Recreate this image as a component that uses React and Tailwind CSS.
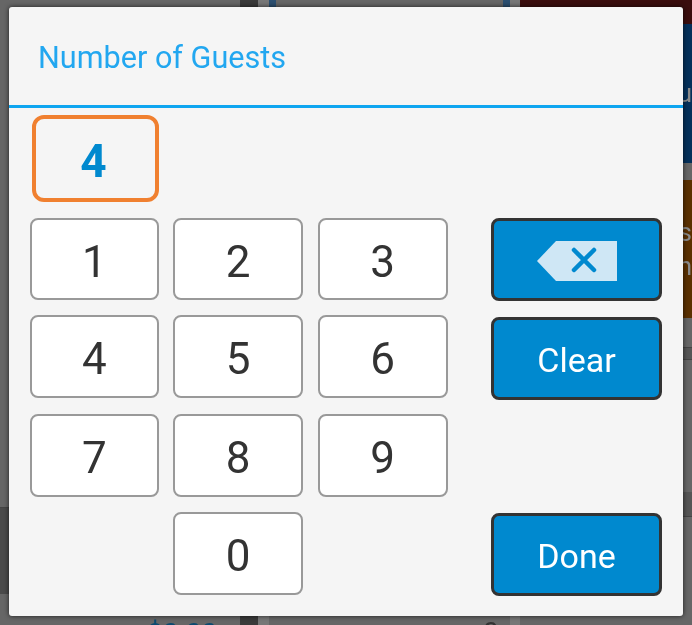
import React from 'react';

const keys = ['1', '2', '3', '4', '5', '6', '7', '8', '9', '', '0', ''];

function Key({ label }) {
    if (!label) return <div />;
    return (
        <button className="flex items-center justify-center pt-[5px] bg-white border-[2.5px] border-[#999999] rounded-lg text-[44px] leading-none text-[#333333]">
            {label}
        </button>
    );
}

function ActionButton({ children }) {
    return (
        <button className="flex items-center justify-center w-[171px] h-[83px] pt-[2px] bg-[#0089cf] border-[3px] border-[#333333] rounded-lg text-[34px] leading-none text-white">
            {children}
        </button>
    );
}

export default function App() {
    return (
        <div className="relative w-[692px] h-[625px] overflow-hidden bg-[#666666] blur-[0.4px] font-['Roboto',sans-serif]">
            {/* Dimmed page behind the dialog */}
            <div className="flex h-full">
                <div className="flex flex-col w-[240px]">
                    <div className="h-[508px] border-b border-[#444444]" />
                    <div className="h-[86px] bg-[#4a4a4a]" />
                    <div className="h-[31px] pl-[147px] pt-[26px] text-[28px] leading-none text-[#0b4a70] whitespace-nowrap">$0.00</div>
                </div>
                <div className="w-[18px] bg-[#3a3a3a]" />
                <div className="w-[11px] bg-[#777777]" />
                <div className="w-[7px]">
                    <div className="h-[7px] bg-[#2c4f70]" />
                </div>
                <div className="flex flex-col justify-end w-[227px] pl-[207px] text-[28px] leading-none text-[#333333]">
                    <div className="h-[6px]">0</div>
                </div>
                <div className="w-[7px]">
                    <div className="h-[7px] bg-[#2c4f70]" />
                </div>
                <div className="w-[10px] bg-[#777777]" />
                <div className="flex flex-col flex-1 text-[26px] text-[#8a8a8a]">
                    <div className="h-[24px] bg-[#3a0d0d]" />
                    <div className="flex items-center justify-end h-[139px] bg-[#04305a]">u</div>
                    <div className="h-[17px]" />
                    <div className="flex flex-col items-end justify-center h-[138px] bg-[#5a3000] leading-[34px]">
                        <span>s</span>
                        <span>n</span>
                    </div>
                    <div className="h-[29px]" />
                    <div className="h-[13px] bg-[#555555] border-y border-[#444444]" />
                    <div className="h-[132px]" />
                    <div className="h-[25px] bg-[#555555] border-b border-[#444444]" />
                </div>
            </div>

            {/* Dialog */}
            <div className="absolute left-[9px] top-[7px] flex flex-col w-[674px] h-[609px] bg-[#f5f5f5] rounded-[3px] shadow-[0_0_5px_rgba(0,0,0,0.7)]">
                <div className="flex items-center h-[101px] pl-[29px] pt-[5px] border-b-[3px] border-[#0ea5f0] text-[30.6px] leading-none text-[#22a7f0]">
                    Number of Guests
                </div>
                <div className="flex flex-col gap-[16px] pt-[7px] pl-[21px]">
                    <div className="flex items-center justify-center w-[127px] h-[87px] ml-[2px] pt-[4px] pr-[4px] border-4 border-[#f08030] rounded-xl text-[46px] leading-none font-bold text-[#0089cf]">
                        4
                    </div>
                    <div className="flex gap-[43px]">
                        <div className="grid grid-cols-[128.5px_130px_130px] grid-rows-[82px_83px_83px_83px] gap-x-[14.5px] gap-y-[15.33px] w-[418px]">
                            {keys.map((k, i) => (
                                <Key key={i} label={k} />
                            ))}
                        </div>
                        <div className="flex flex-col">
                            <ActionButton>
                                <svg width="80" height="40" viewBox="0 0 80 40">
                                    <path d="M0 20L19 0H80V40H19Z" fill="#cfe7f5" />
                                    <path d="M37 9L57 29M57 9L37 29" stroke="#0089cf" strokeWidth="4.5" strokeLinecap="round" />
                                </svg>
                            </ActionButton>
                            <div className="mt-[16px]">
                                <ActionButton>Clear</ActionButton>
                            </div>
                            <div className="mt-[113px]">
                                <ActionButton>Done</ActionButton>
                            </div>
                        </div>
                    </div>
                </div>
            </div>
        </div>
    );
}
